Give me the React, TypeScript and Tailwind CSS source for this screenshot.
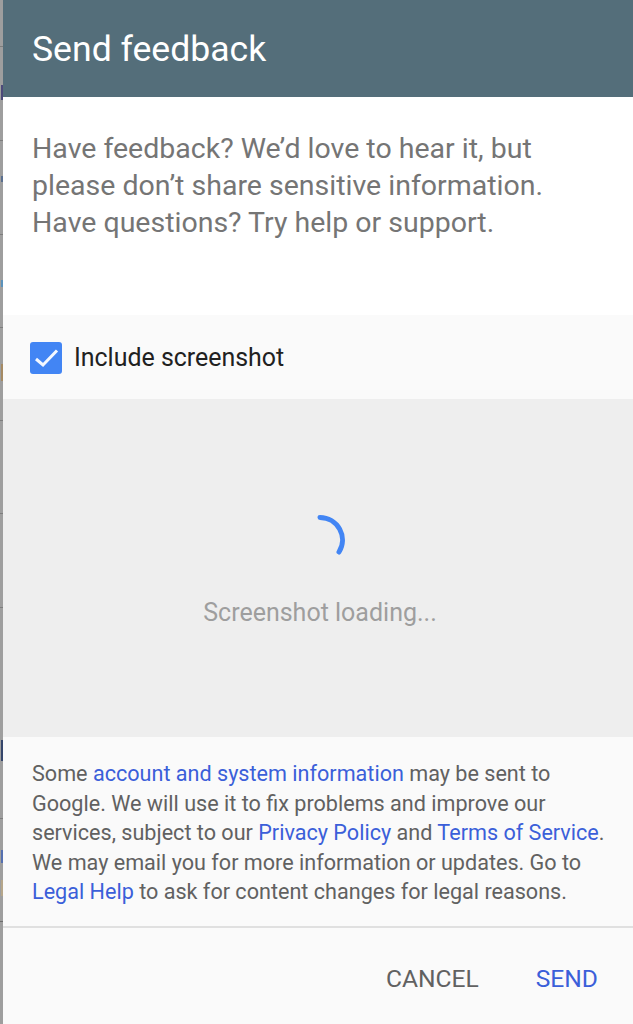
const font = { fontFamily: "Roboto, sans-serif" };

const marks: [string, string][] = [
  ["mt-[46px] h-px", "bg-[#7d7d7d]"],
  ["mt-[38px] h-[15px] ml-[1px]", "bg-[#4d4a7a]"],
  ["mt-[40px] h-px", "bg-[#7d7d7d]"],
  ["mt-[35px] h-[6px] ml-[1px]", "bg-[#5a6f8f]"],
  ["mt-[52px] h-px", "bg-[#7d7d7d]"],
  ["mt-[45px] h-[7px] ml-[1px]", "bg-[#5b92bb]"],
  ["mt-[40px] h-px", "bg-[#7d7d7d]"],
  ["mt-[36px] h-[17px] ml-[1px]", "bg-[#a58a63]"],
  ["mt-[39px] h-px", "bg-[#7d7d7d]"],
  ["mt-[92px] h-px", "bg-[#7d7d7d]"],
  ["mt-[93px] h-px", "bg-[#7d7d7d]"],
  ["mt-[132px] h-[21px] ml-[1px]", "bg-[#35466b]"],
  ["mt-[57px] h-px", "bg-[#7d7d7d]"],
  ["mt-[31px] h-[13px] ml-[1px]", "bg-[#5570b0]"],
  ["mt-[17px] h-[16px] ml-[1px]", "bg-[#b5a68a]"],
  ["mt-[25px] h-px", "bg-[#6d6d6d]"],
];

export default function App() {
  return (
    <div className="flex h-[1024px] w-[633px] overflow-hidden bg-white" style={font}>
      <div className="flex w-[3px] shrink-0 flex-col bg-[#9e9e9e]">
        {marks.map(([size, color], i) => (
          <div key={i} className={`${size} ${color}`} />
        ))}
      </div>
      <div className="flex min-w-0 flex-1 flex-col">
        <header className="flex h-[97px] shrink-0 items-center bg-[#546e7a] pl-[29px]">
          <h1 className="text-[35.6px] leading-[40px] font-normal text-white">Send feedback</h1>
        </header>
        <p className="h-[218px] shrink-0 pt-[33px] pl-[29px] text-[28.5px] leading-[37px] text-[#757575]">
          Have feedback? We’d love to hear it, but
          <br />
          please don’t share sensitive information.
          <br />
          Have questions? Try help or support.
        </p>
        <label className="flex h-[84px] shrink-0 items-center bg-[#fafafa] pt-[1px] pl-[27px]">
          <span className="flex h-8 w-8 items-center justify-center rounded-[3px] bg-[#4285f4]">
            <svg viewBox="0 0 32 32" className="h-8 w-8" fill="none" stroke="#f4f8ff" strokeWidth="3">
              <path d="M6 17 L13 23 L27 8.5" />
            </svg>
          </span>
          <span className="ml-[12px] text-[24.95px] leading-[30px] text-[#212121]">Include screenshot</span>
        </label>
        <div className="flex h-[338px] shrink-0 flex-col items-center bg-[#eeeeee] pl-[4px]">
          <svg viewBox="0 0 50 50" className="mt-[116px] h-[50px] w-[50px]" fill="none">
            <path d="M25 2.5 A 22.5 22.5 0 0 1 44 37" stroke="#4285f4" strokeWidth="5" strokeLinecap="round" />
          </svg>
          <span className="mt-[33px] text-[25px] leading-[30px] text-[#9e9e9e]">Screenshot loading...</span>
        </div>
        <p className="h-[191px] shrink-0 border-b-2 border-[#e0e0e0] bg-[#fafafa] pt-[22px] pl-[29px] text-[21.6px] leading-[29.5px] text-[#616161]">
          Some <a className="text-[#3b5fd9]">account and system information</a> may be sent to
          <br />
          Google. We will use it to fix problems and improve our
          <br />
          services, subject to our <a className="text-[#3b5fd9]">Privacy Policy</a> and{" "}
          <a className="text-[#3b5fd9]">Terms of Service</a>.
          <br />
          We may email you for more information or updates. Go to
          <br />
          <a className="text-[#3b5fd9]">Legal Help</a> to ask for content changes for legal reasons.
        </p>
        <footer className="flex flex-1 items-center justify-end bg-[#fafafa] pt-[5px] pr-[35px] text-[24.6px] leading-[30px]">
          <button className="text-[#616161]">CANCEL</button>
          <button className="ml-[57px] text-[#3b5fd9]">SEND</button>
        </footer>
      </div>
    </div>
  );
}
